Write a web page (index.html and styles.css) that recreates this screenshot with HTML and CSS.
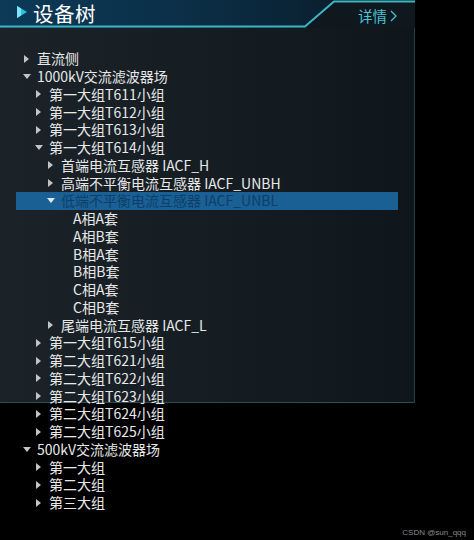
FILE: index.html
```html
<!DOCTYPE html>
<html lang="zh-CN">
<head>
  <meta charset="UTF-8" />
  <meta name="viewport" content="width=device-width, initial-scale=1.0" />
  <title>设备树</title>
  <link rel="stylesheet" href="styles.css">
</head>
<body>

  <div class="panel">
    <div class="panel-head">
      <div class="head-title">
        <svg class="head-icon" viewBox="0 0 10 12">
          <path fill="#28c6e6" d="M0 0L10 6L0 12z"/>
          <path fill="#7fe4f5" d="M0 0L4 2.4V9.6L0 12z"/>
        </svg>
        <h1>设备树</h1>
      </div>
      <!-- 标题栏斜角边框 -->
      <svg class="head-frame" viewBox="0 0 415 28" preserveAspectRatio="none">
        <path d="M334 0H415V28H305z" fill="#0f181e"/>
        <path d="M0 26.5H305L334 1.5H415" stroke="#3db4c4" stroke-width="2" fill="none"/>
      </svg>
      <a class="head-more">详情
        <svg class="chev" viewBox="0 0 7 12">
          <path d="M1 1L6 6L1 11" stroke="#49c2d4" stroke-width="1.3" fill="none"/>
        </svg>
      </a>
    </div>

    <div class="tree" id="tree"></div>
  </div>

  <div class="mark">CSDN @sun_qqq</div>

  <script>
    // 树数据：[名称, 展开?, 子节点]
    const data = [
      ['直流侧', false, [[]]],
      ['1000kV交流滤波器场', true, [
        ['第一大组T611小组', false, [[]]],
        ['第一大组T612小组', false, [[]]],
        ['第一大组T613小组', false, [[]]],
        ['第一大组T614小组', true, [
          ['首端电流互感器 IACF_H', false, [[]]],
          ['高端不平衡电流互感器 IACF_UNBH', false, [[]]],
          ['低端不平衡电流互感器 IACF_UNBL', true, [
            ['A相A套'], ['A相B套'], ['B相A套'], ['B相B套'], ['C相A套'], ['C相B套']
          ], 'active'],
          ['尾端电流互感器 IACF_L', false, [[]]]
        ]],
        ['第一大组T615小组', false, [[]]],
        ['第二大组T621小组', false, [[]]],
        ['第二大组T622小组', false, [[]]],
        ['第二大组T623小组', false, [[]]],
        ['第二大组T624小组', false, [[]]],
        ['第二大组T625小组', false, [[]]]
      ]],
      ['500kV交流滤波器场', true, [
        ['第一大组', false, [[]]],
        ['第二大组', false, [[]]],
        ['第三大组', false, [[]]]
      ]]
    ];

    function render(nodes, level, box) {
      nodes.forEach(n => {
        const [label, open, children, state] = n;
        const row = document.createElement('div');
        row.className = 'node' + (state ? ' ' + state : '');
        row.style.paddingLeft = (4 + level * 12) + 'px';

        const arrow = document.createElement('span');
        arrow.className = 'arrow' + (children ? (open ? ' open' : ' closed') : '');
        row.appendChild(arrow);

        const text = document.createElement('span');
        text.className = 'label';
        text.textContent = label;
        row.appendChild(text);
        box.appendChild(row);

        if (children && open) render(children, level + 1, box);
      });
    }

    render(data, 0, document.getElementById('tree'));
  </script>

</body>
</html>
```

FILE: styles.css
```css
html, body {
  margin: 0;
  background: #000;
}

body {
  font-family: "Noto Sans CJK SC", "Noto Sans", sans-serif;
  color: #e8e8e8;
  width: 474px;
  height: 540px;
  overflow: hidden;
}

.panel {
  width: 414px;
  height: 402px;
  background: linear-gradient(90deg, #1b2329 0%, #141c22 60%, #0f161b 100%);
  border-right: 1px solid #21414a;
  border-bottom: 1px solid #2a4d57;
}

/* 标题栏 */
.panel-head {
  position: relative;
  height: 28px;
  background: linear-gradient(90deg, #0c3a57 0%, #0b2f47 45%, #0a2233 75%, #0f181e 100%);
}

.head-title {
  display: flex;
  align-items: center;
  gap: 6px;
  padding-left: 17px;
  height: 26px;
}

.head-icon {
  width: 10px;
  height: 12px;
  margin-top: -2px;
}

.head-title h1 {
  margin: 0;
  font-size: 20.5px;
  font-weight: 400;
  color: #fff;
  line-height: 26px;
  letter-spacing: 0.5px;
}

.head-frame {
  position: absolute;
  left: 0;
  top: 0;
  width: 415px;
  height: 28px;
}

.head-more {
  position: absolute;
  right: 17px;
  top: 6px;
  display: flex;
  align-items: center;
  gap: 3px;
  font-size: 14.5px;
  line-height: 20px;
  color: #49c2d4;
}

.head-more .chev {
  width: 7px;
  height: 12px;
}

/* 树 */
.tree {
  margin: 22px 0 0 16px;
  width: 382px;
}

.node {
  display: flex;
  align-items: center;
  height: 17.75px;
  font-size: 14px;
  white-space: nowrap;
}

.node.active {
  background: #1a6094;
  color: #0d3f6a;
}

.arrow {
  width: 17px;
  flex: none;
  display: flex;
  align-items: center;
  justify-content: flex-start;
  padding-left: 3px;
  box-sizing: border-box;
}

.arrow.closed::before {
  content: "";
  border-left: 5px solid #c4c4c4;
  border-top: 4px solid transparent;
  border-bottom: 4px solid transparent;
  margin-left: 1px;
}

.arrow.open::before {
  content: "";
  border-top: 5px solid #c4c4c4;
  border-left: 4px solid transparent;
  border-right: 4px solid transparent;
}

.node.active .arrow.open::before {
  border-top-color: #e0e8f0;
}

.label {
  line-height: 17px;
}

.mark {
  position: absolute;
  right: 8px;
  top: 528px;
  font-family: "Liberation Sans", sans-serif;
  font-size: 8px;
  color: #8a8a8a;
}
```
